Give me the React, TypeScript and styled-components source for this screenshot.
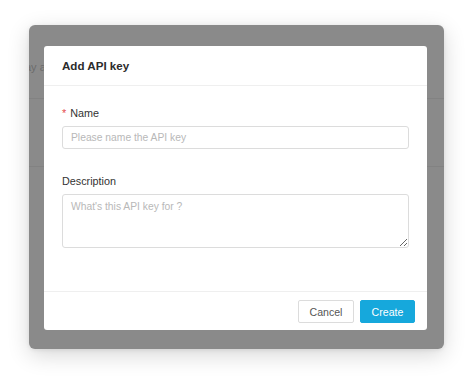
import React from 'react';
import styled, {createGlobalStyle} from 'styled-components';

const GlobalStyle = createGlobalStyle`
  html, body {
    margin: 0;
    padding: 0;
    background: #fff;
  }
  body {
    font-family: 'Liberation Sans', Arial, sans-serif;
    -webkit-font-smoothing: antialiased;
  }
  * {
    box-sizing: border-box;
  }
`;

const App = () => (
  <>
    <GlobalStyle />
    <Stage>
      <Window>
        <BackPage>
          <BackRow height={74}>
            <BackTitle>
              <BackText>ay a</BackText>
            </BackTitle>
          </BackRow>
          <BackRow height={68} />
        </BackPage>

        <Modal>
          <Header>Add API key</Header>
          <Body>
            <Label>
              <Required>*</Required>Name
            </Label>
            <Input placeholder="Please name the API key" />
            <Label spaced>Description</Label>
            <TextArea placeholder="What's this API key for ?" />
          </Body>
          <Footer>
            <Button width={56}>Cancel</Button>
            <Button width={55} primary>
              Create
            </Button>
          </Footer>
        </Modal>
      </Window>
    </Stage>
  </>
);

export default App;

const Stage = styled.div`
  width: 474px;
  height: 382px;
  padding: 25px 0 0 29px;
`;

const Window = styled.div`
  position: relative;
  width: 415px;
  height: 324px;
  background: #8a8a8a;
  border-radius: 6px;
  overflow: hidden;
  box-shadow: 0 6px 22px rgba(0, 0, 0, 0.16), 0 1px 4px rgba(0, 0, 0, 0.08);
`;

const BackPage = styled.div`
  display: flex;
  flex-direction: column;
`;

const BackRow = styled.div<{height: number}>`
  height: ${p => p.height}px;
  display: flex;
  align-items: center;
  border-bottom: 1px solid rgba(0, 0, 0, 0.05);
`;

const BackTitle = styled.div`
  width: 15px;
  overflow: hidden;
  white-space: nowrap;
  margin-top: 9px;
`;

const BackText = styled.span`
  display: inline-block;
  margin-left: -4px;
  font-size: 11px;
  color: #6c6c6c;
`;

const Modal = styled.div`
  position: absolute;
  left: 15px;
  top: 21px;
  width: 383px;
  height: 284px;
  background: #fff;
  border-radius: 3px;
  display: flex;
  flex-direction: column;
`;

const Header = styled.div`
  height: 40px;
  padding: 0 18px;
  display: flex;
  align-items: center;
  border-bottom: 1px solid #efefef;
  font-size: 11.6px;
  font-weight: 600;
  color: #2b2b2b;
`;

const Body = styled.div`
  flex: 1;
  display: flex;
  flex-direction: column;
  padding: 20px 18px 0;
`;

const Label = styled.label<{spaced?: boolean}>`
  display: block;
  height: 14px;
  line-height: 14px;
  margin-top: ${p => (p.spaced ? '25px' : '0')};
  margin-bottom: 6px;
  font-size: 10.8px;
  color: #333;
`;

const Required = styled.span`
  color: #e5484d;
  margin-right: 4px;
`;

const fieldStyles = `
  width: 100%;
  border: 1px solid #dcdcdc;
  border-radius: 3px;
  padding: 0 8px;
  font-family: 'Liberation Sans', Arial, sans-serif;
  font-size: 10.3px;
  color: #333;
  background: #fff;
  outline: none;
  &::placeholder {
    color: #b8b8b8;
  }
`;

const Input = styled.input`
  ${fieldStyles}
  height: 23px;
`;

const TextArea = styled.textarea`
  ${fieldStyles}
  height: 54px;
  padding-top: 6px;
  resize: vertical;
`;

const Footer = styled.div`
  height: 39px;
  display: flex;
  justify-content: flex-end;
  align-items: flex-start;
  gap: 6px;
  padding: 8px 12px 0;
  border-top: 1px solid #efefef;
`;

const Button = styled.button<{primary?: boolean; width: number}>`
  width: ${p => p.width}px;
  height: 23px;
  padding: 0;
  border-radius: 2px;
  border: 1px solid ${p => (p.primary ? '#16a8dc' : '#dcdcdc')};
  background: ${p => (p.primary ? '#16a8dc' : '#fff')};
  color: ${p => (p.primary ? '#fff' : '#555')};
  font-family: 'Liberation Sans', Arial, sans-serif;
  font-size: 10.6px;
  font-weight: ${p => (p.primary ? 500 : 400)};
  cursor: pointer;
`;
